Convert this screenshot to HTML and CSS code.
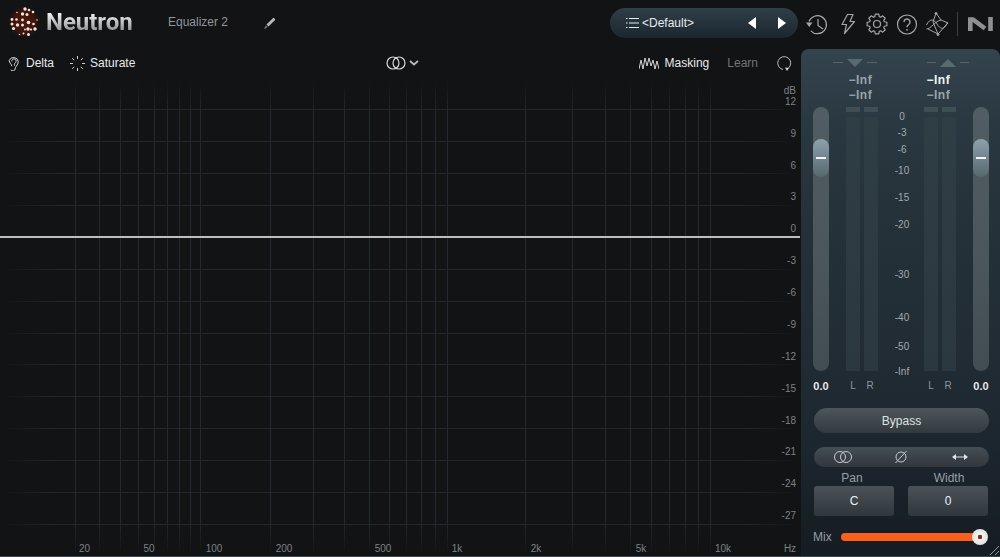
FILE: index.html
```html
<!DOCTYPE html>
<html lang="en">
<head>
<meta charset="utf-8">
<title>Neutron Equalizer 2</title>
<link rel="stylesheet" href="styles.css">
</head>
<body>
<div class="app">
  <header class="header">
    <svg class="logo" viewBox="0 0 46 44" width="46" height="44">
      <defs>
        <radialGradient id="glow"><stop offset="0" stop-color="#4a1a0c"/><stop offset=".6" stop-color="#40150a"/><stop offset="1" stop-color="#111315" stop-opacity="0"/></radialGradient>
      </defs>
      <circle cx="24" cy="22" r="18" fill="url(#glow)"/>
      <g fill="#f3e6df">
        <circle cx="25" cy="9" r="1.700"/><circle cx="29" cy="10" r="1.300"/><circle cx="33" cy="12" r="1.300"/>
        <circle cx="22.500" cy="14" r="1.700"/><circle cx="27" cy="14.500" r="1.500"/><circle cx="17" cy="12.500" r=".8"/>
        <circle cx="12" cy="19.500" r="1.400"/><circle cx="16.500" cy="19.500" r="1.300"/><circle cx="22.500" cy="20" r="1.400"/>
        <circle cx="28.500" cy="22.500" r="1.800"/><circle cx="33.500" cy="24" r="1.300"/><circle cx="37" cy="20" r=".8"/>
        <circle cx="12" cy="24" r="1.500"/><circle cx="17.500" cy="25" r="1.700"/><circle cx="22.500" cy="25" r="1.500"/>
        <circle cx="13.500" cy="28.500" r="1.600"/><circle cx="35" cy="29" r="1.700"/><circle cx="31" cy="29.500" r="1.100"/>
        <circle cx="28" cy="29" r="1.700"/><circle cx="25" cy="29.500" r=".9"/><circle cx="23.500" cy="33.500" r="1"/>
        <circle cx="28.500" cy="34.500" r="1.500"/><circle cx="19.500" cy="34.500" r=".8"/>
      </g>
    </svg>
    <div class="brand">Neutron</div>
    <div class="module">Equalizer 2</div>
    <svg class="pencil" viewBox="0 0 14 14" width="14" height="14"><path d="M3.500 8.500 9.800 2.200a1 1 0 0 1 1.400 0l.6.600a1 1 0 0 1 0 1.400L5.500 10.500z" fill="#b4b8bb"/><path d="M3 9.300 4.700 11 2 12.800 1 13z" fill="#777c80"/></svg>
    <div class="preset">
      <svg class="list-icon" viewBox="0 0 13 10" width="13" height="10"><path d="M0 .500h1.500M0 5h1.500M0 9.500h1.500M3 .500h10M3 5h10M3 9.500h10" stroke="#e8eaec" fill="none"/></svg>
      <span class="preset-name">&lt;Default&gt;</span>
      <span class="tri tri-left"></span>
      <span class="tri tri-right"></span>
    </div>
    <div class="tools">
      <svg viewBox="0 0 24 24" width="24" height="24" fill="none" stroke="#a4a8ab" stroke-width="1.200"><path d="M5.800 18.800A9 9 0 1 0 4 9.500"/><path d="M1 10.500h6.500L4.200 15z" fill="#a4a8ab" stroke="none"/><path d="M13 7v6.500l5 3.500"/></svg>
      <svg viewBox="0 0 24 24" width="24" height="24" fill="none" stroke="#a4a8ab" stroke-width="1.200"><path d="M12.500 2.500h5.500l-3 7h4.500L9.500 21.500l2-9H7z" stroke-linejoin="round"/></svg>
      <svg viewBox="0 0 24 24" width="24" height="24" fill="none" stroke="#a4a8ab" stroke-width="1.200"><polygon stroke-linejoin="round" points="10.260,2.150 13.740,2.150 14.250,4.640 15.620,5.200 17.740,3.810 20.190,6.260 18.800,8.390 19.360,9.750 21.850,10.260 21.850,13.740 19.360,14.250 18.800,15.610 20.190,17.740 17.740,20.190 15.610,18.800 14.250,19.360 13.740,21.850 10.260,21.850 9.750,19.360 8.390,18.800 6.260,20.190 3.810,17.740 5.200,15.610 4.640,14.250 2.150,13.740 2.150,10.260 4.640,9.750 5.200,8.390 3.810,6.260 6.260,3.810 8.390,5.200 9.750,4.640"/><circle cx="12" cy="12" r="3.500"/></svg>
      <svg viewBox="0 0 24 24" width="24" height="24" fill="none" stroke="#a4a8ab" stroke-width="1.200"><circle cx="12" cy="12.500" r="9.500"/><path d="M9 10a3 3 0 1 1 4.700 2.500c-1.200.8-1.700 1.400-1.700 2.800" stroke-width="1.400"/><circle cx="12" cy="17.800" r=".9" fill="#a4a8ab" stroke="none"/></svg>
      <svg viewBox="0 0 24 24" width="24" height="24" fill="none" stroke="#a4a8ab" stroke-width="1"><path d="M11 1 16 8 23 11"/><path d="M1.500 13C5 6 9 7 12 12s7 7 10.500-2"/><path d="M11 1 8 10 13 22"/><path d="M1.500 17C6 17 10 9 16 8"/><path d="M23 11 13 22 3 17"/><circle cx="11" cy="1.500" r="1" fill="#a4a8ab"/><circle cx="13" cy="22.500" r="1" fill="#a4a8ab"/></svg>
      <span class="tool-sep"></span>
      <svg class="ni" viewBox="0 0 25 14" width="25" height="14" fill="none" stroke="#8e9194" stroke-width="4.600"><path d="M2.300 14V2.500H5L17 11.500"/><path d="M22.500 0v14"/></svg>
    </div>
  </header>

  <div class="body">
    <main class="main">
      <div class="toolbar">
        <div class="bar-left">
          <span class="bar-item">
            <svg viewBox="1 0 10 15" width="12" height="16" fill="none" stroke="#e4e6e8" stroke-width=".9"><path d="M3 14c1.500 1.500 4 1 4-1 0-2 3-3.500 3-7A4.500 4.500 0 0 0 1.500 5c0 2.500 2 3 2.500 5.500"/><path d="M4 6a2 2 0 1 1 3.500 1c-1 1-1.500 1.500-1 3"/></svg>
            Delta
          </span>
          <span class="bar-item">
            <svg viewBox="0 0 15 15" width="15" height="15" fill="none" stroke="#d0d2d4" stroke-width="1"><path d="M7.500 0v3M7.500 12v3M0 7.500h3M12 7.500h3M2.200 2.200l2 2M10.800 10.800l2 2M2.200 12.800l2-2M10.800 4.200l2-2"/></svg>
            Saturate
          </span>
        </div>
        <div class="bar-center">
          <svg viewBox="0 0 20 14" width="20" height="14" fill="none" stroke="#d8dadc" stroke-width="1.200"><circle cx="7" cy="7" r="6"/><circle cx="13" cy="7" r="6"/></svg>
          <svg viewBox="0 0 10 6" width="10" height="6" fill="none" stroke="#b8bcc0" stroke-width="1.800"><path d="M1 1l4 3.500L9 1"/></svg>
        </div>
        <div class="bar-right">
          <span class="bar-item">
            <svg viewBox="0 0 20 13" width="20" height="13" fill="none" stroke="#d4d6d8" stroke-width="1"><path d="M0 12l2-9 2 9 2-11 2 8 2-8 2 8 2-6 2 9 2-8 2 8"/></svg>
            Masking
          </span>
          <span class="learn">Learn</span>
          <svg viewBox="0 0 16 16" width="16" height="16" fill="none" stroke="#b8bcc0" stroke-width="1"><path d="M7 14.500A6.500 6.500 0 1 1 12.500 13"/><path d="M9 12.500l4 .5-2 3z" fill="#d8dadc" stroke="none"/></svg>
        </div>
      </div>
      <div class="graph">
        <svg viewBox="0 80 800 476" width="800" height="476">
          <defs>
            <linearGradient id="vfade" gradientUnits="userSpaceOnUse" x1="0" y1="80" x2="0" y2="556">
              <stop offset="0" stop-color="#222a2f" stop-opacity="0"/><stop offset=".07" stop-color="#222a2f"/><stop offset=".93" stop-color="#222a2f"/><stop offset="1" stop-color="#222a2f" stop-opacity="0"/>
            </linearGradient>
            <linearGradient id="hfade" gradientUnits="userSpaceOnUse" x1="0" y1="0" x2="800" y2="0">
              <stop offset="0" stop-color="#20282c" stop-opacity="0"/><stop offset=".07" stop-color="#20282c"/><stop offset=".93" stop-color="#20282c"/><stop offset="1" stop-color="#20282c" stop-opacity="0"/>
            </linearGradient>
          </defs>
          <path stroke="url(#vfade)" fill="none" d="M75.500 80V556M99.500 80V556M120.500 80V556M138.500 80V556M154.500 80V556M167.500 80V556M179.500 80V556M190.500 80V556M200.500 80V556M270.500 80V556M313.500 80V556M344.500 80V556M369.500 80V556M389.500 80V556M406.500 80V556M421.500 80V556M435.500 80V556M447.500 80V556M525.500 80V556M572.500 80V556M605.500 80V556M630.500 80V556M651.500 80V556M669.500 80V556M685.500 80V556M698.500 80V556M710.500 80V556"/>
          <path stroke="url(#hfade)" fill="none" d="M0 109.500H800M0 141.500H800M0 173.500H800M0 205.500H800M0 269.500H800M0 301.500H800M0 333.500H800M0 364.500H800M0 396.500H800M0 428.500H800M0 460.500H800M0 492.500H800M0 524.500H800"/>
          <rect x="0" y="236" width="800" height="2" fill="#bcbebf"/>
          <g class="axis" text-anchor="middle">
            <text x="84.500" y="552">20</text><text x="149" y="552">50</text><text x="214" y="552">100</text><text x="284" y="552">200</text><text x="383" y="552">500</text><text x="457" y="552">1k</text><text x="536" y="552">2k</text><text x="641" y="552">5k</text><text x="723" y="552">10k</text><text x="790" y="552">Hz</text>
          </g>
          <g class="axis" text-anchor="end">
            <text x="796" y="94">dB</text><text x="796" y="105">12</text><text x="796" y="137">9</text><text x="796" y="169">6</text><text x="796" y="200">3</text><text x="796" y="232">0</text><text x="796" y="264">-3</text><text x="796" y="296">-6</text><text x="796" y="328">-9</text><text x="796" y="360">-12</text><text x="796" y="392">-15</text><text x="796" y="424">-18</text><text x="796" y="455">-21</text><text x="796" y="487">-24</text><text x="796" y="519">-27</text>
          </g>
        </svg>
      </div>
    </main>

    <aside class="panel">
      <div class="strips">
        <div class="strip">
          <div class="strip-head"></div>
          <div class="fader"><div class="thumb"><span class="thumb-mark"></span></div></div>
          <div class="strip-foot value">0.0</div>
        </div>
        <div class="strip">
          <div class="strip-head">
            <div class="marker marker-in"><span class="dash"></span><span class="arrow arrow-down"></span><span class="dash"></span></div>
            <div class="inf">−Inf</div>
            <div class="inf">−Inf</div>
          </div>
          <div class="meters">
            <div class="meter"><span class="peak"></span><span class="level"></span></div>
            <div class="meter"><span class="peak"></span><span class="level"></span></div>
          </div>
          <div class="strip-foot lr"><span>L</span><span>R</span></div>
        </div>
        <div class="strip">
          <div class="strip-head"></div>
          <div class="scale">
            <span style="top:10px">0</span><span style="top:26px">-3</span><span style="top:43px">-6</span><span style="top:64px">-10</span><span style="top:91px">-15</span><span style="top:118px">-20</span><span style="top:168px">-30</span><span style="top:211px">-40</span><span style="top:240px">-50</span><span style="top:265px">-Inf</span>
          </div>
        </div>
        <div class="strip">
          <div class="strip-head">
            <div class="marker marker-out"><span class="dash"></span><span class="arrow arrow-up"></span><span class="dash"></span></div>
            <div class="inf inf-hot">−Inf</div>
            <div class="inf">−Inf</div>
          </div>
          <div class="meters">
            <div class="meter"><span class="peak"></span><span class="level"></span></div>
            <div class="meter"><span class="peak"></span><span class="level"></span></div>
          </div>
          <div class="strip-foot lr"><span>L</span><span>R</span></div>
        </div>
        <div class="strip strip-end">
          <div class="strip-head"></div>
          <div class="fader"><div class="thumb"><span class="thumb-mark"></span></div></div>
          <div class="strip-foot value">0.0</div>
        </div>
      </div>

      <button class="bypass">Bypass</button>

      <div class="modes">
        <svg viewBox="0 0 18 12" width="18" height="12" fill="none" stroke="#c8cbce" stroke-width="1"><circle cx="6" cy="6" r="5.500"/><circle cx="12" cy="6" r="5.500"/></svg>
        <svg viewBox="0 0 14 14" width="14" height="14" fill="none" stroke="#c8cbce" stroke-width="1"><circle cx="7" cy="7" r="5"/><path d="M1.500 13 12.500 1"/></svg>
        <svg viewBox="0 0 16 8" width="16" height="8" fill="#e0e2e4"><path d="M3 3.500h10v1H3z"/><path d="M0 4l4-3v6zM16 4l-4-3v6z"/></svg>
      </div>

      <div class="fields">
        <div class="field field-pan"><label>Pan</label><div class="field-box">C</div></div>
        <div class="field field-width"><label>Width</label><div class="field-box">0</div></div>
      </div>

      <div class="mix">
        <span class="mix-label">Mix</span>
        <div class="mix-track"><span class="mix-knob"></span></div>
      </div>
      <svg class="grip" viewBox="0 0 9 9" width="9" height="9" stroke="#8e979d" fill="none"><path d="M0 9 9 0M5 9l4-4"/></svg>
    </aside>
  </div>
</div>
</body>
</html>
```
FILE: styles.css
```css
* { box-sizing: border-box; }
html, body { margin: 0; height: 100%; overflow: hidden; background: #111315; }
body { font-family: "Liberation Sans", Arial, sans-serif; font-size: 12px; color: #e4e6e8; }

.app { width: 1000px; height: 557px; display: flex; flex-direction: column; border-bottom: 1px solid #3c464c; }

/* header */
.header { height: 49px; flex: none; display: flex; align-items: flex-start; }
.logo { flex: none; }
.brand {
  font-family: Roboto, "Liberation Sans", sans-serif; font-weight: 700; font-size: 24px; line-height: 45px; width: 100px; letter-spacing: -.05px;
  background: linear-gradient(180deg, #f0f0f0 30%, #8c8c8c 72%); -webkit-background-clip: text; background-clip: text; color: transparent;
}
.module { margin-left: 22px; line-height: 45px; color: #92969a; width: 95px; }
.pencil { margin: 16px 0 0 0; flex: none; }
.preset {
  width: 188px; height: 30px; margin: 8px 0 0 333px; border-radius: 15px; display: flex; align-items: center;
  padding-left: 16px; background: linear-gradient(180deg, #2f3e48, #1b272f);
}
.preset-name { margin-left: 3px; width: 106px; color: #e8eaec; }
.list-icon { flex: none; }
.tri { width: 0; height: 0; border-top: 6px solid transparent; border-bottom: 6px solid transparent; }
.tri-left { border-right: 8px solid #fff; margin-right: 22px; }
.tri-right { border-left: 8px solid #fff; }
.tools { display: flex; align-items: center; gap: 6px; margin: 12px 0 0 7px; height: 24px; }
.tools svg { flex: none; }
.tool-sep { width: 1px; height: 24px; background: #3a3e41; margin: 0 4px 0 2px; }

/* main */
.body { flex: 1; display: flex; min-height: 0; }
.main { width: 801px; flex: none; display: flex; flex-direction: column; }
.toolbar { height: 31px; flex: none; display: flex; align-items: center; padding: 0 8px 3px; }
.bar-left, .bar-right { flex: 1; display: flex; align-items: center; }
.bar-left { gap: 16px; }
.bar-right { justify-content: flex-end; padding-right: 1px; }
.bar-item { display: inline-flex; align-items: center; gap: 5px; color: #e8eaec; }
.bar-left .bar-item:first-child, .bar-right .bar-item { gap: 6px; }
.bar-center { display: flex; align-items: center; gap: 3px; margin-left: 4px; }
.learn { margin: 0 18px; color: #70757a; }
.graph { flex: 1; min-height: 0; }
.graph svg { display: block; }
.axis text { font-family: "Liberation Sans", Arial, sans-serif; font-size: 10px; fill: #7c8288; }

/* side panel */
.panel {
  position: relative; width: 199px; flex: none; height: 507px; padding: 0 11px 0 12px; border-radius: 8px 8px 0 0;
  background: linear-gradient(180deg, #34444e 0, #2a3841 70px, #25323a 160px, #212c34 300px, #1c262e 400px, #151c22 100%);
}
.strips { display: grid; grid-template-columns: 33px 32px 46px 32px 33px; }
.strip { display: flex; flex-direction: column; }
.strip-end { align-items: flex-end; }
.strip-head { height: 58px; padding-top: 9px; flex: none; }
.strip-foot { height: 14px; margin-top: 8px; line-height: 14px; font-size: 10px; }
.value { width: 16px; font-weight: 700; font-size: 11px; text-align: center; color: #e6e8ea; white-space: nowrap; }

.fader { position: relative; width: 16px; height: 264px; border-radius: 8px; background: linear-gradient(180deg, #525c63, #4a555c 60%, #414c53); }
.thumb { position: absolute; left: 0; top: 32px; width: 16px; height: 38px; border-radius: 8px; background: linear-gradient(180deg, #8ea2ac, #56676f); display: flex; align-items: center; justify-content: center; }
.thumb-mark { width: 10px; height: 2px; background: #f2f4f5; }

.marker { display: flex; align-items: center; gap: 4px; height: 9px; margin-bottom: 6px; }
.marker-in { width: 44px; margin-left: -13px; }
.marker-out { width: 42px; margin-left: 3px; }
.dash { width: 10px; height: 1px; background: #55636b; }
.arrow { width: 0; height: 0; border-left: 8px solid transparent; border-right: 8px solid transparent; }
.arrow-down { border-top: 8px solid #5a6a73; }
.arrow-up { border-bottom: 8px solid #5a6a73; }
.inf { padding-left: 2.5px; height: 15px; line-height: 14px; color: #9aa3a8; font-weight: 700; font-size: 12px; letter-spacing: .5px; white-space: nowrap; }
.inf-hot { color: #f2f4f5; }

.meters { display: flex; gap: 4px; height: 264px; }
.meter { width: 14px; display: flex; flex-direction: column; gap: 5px; }
.peak { height: 5px; background: #404e56; }
.level { flex: 1; background: linear-gradient(180deg, #2f3d45, #2b3840); }
.lr { display: flex; gap: 9px; padding-left: 3px; color: #8e979d; }
.lr span { width: 8px; text-align: center; }

.scale { position: relative; height: 264px; }
.scale span { position: absolute; left: 0; right: -2px; transform: translateY(-50%); text-align: center; font-size: 10px; line-height: 12px; color: #a2a9ae; }

.bypass {
  display: block; width: 175px; height: 25px; margin: 15px 0 0 1px; padding: 0; border: 0; border-radius: 13px; font: 12px "Liberation Sans", Arial, sans-serif; color: #dfe2e4;
  background: linear-gradient(180deg, #4d565c, #33393f);
}
.modes { width: 175px; height: 20px; margin: 14px 0 0 1px; border-radius: 10px; display: grid; grid-template-columns: repeat(3, 1fr); align-items: center; justify-items: center; background: linear-gradient(180deg, #454e55, #30373d); }
.fields { display: flex; gap: 14px; margin: 4px 0 0 1px; }
.field { width: 80px; }
.field label { display: block; height: 15px; line-height: 15px; text-align: center; color: #989ea3; }
.field-box { height: 30px; border-radius: 3px; line-height: 30px; text-align: center; color: #eef0f1; background: linear-gradient(180deg, #4a5258, #30373c); }
.field-pan label { transform: translateX(-2px); }
.field-width label { transform: translateX(1px); }

.mix { display: flex; align-items: center; margin-top: 13px; height: 16px; }
.mix-label { width: 28px; color: #989ea3; }
.mix-track { position: relative; width: 144px; height: 8px; border-radius: 4px; background: #fb5f1e; }
.mix-knob { position: absolute; right: -3px; top: -4px; width: 16px; height: 16px; border-radius: 50%; background: radial-gradient(circle, #8a2a10 0 2px, #f4f4f4 2.5px, #d6d6d6 100%); }
.grip { position: absolute; right: 1px; bottom: 1px; }
```
